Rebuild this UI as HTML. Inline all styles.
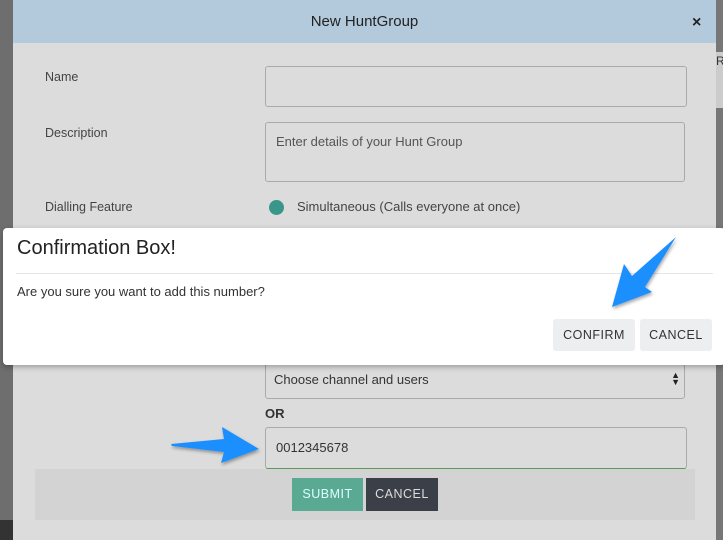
<!DOCTYPE html>
<html><head><style>
*{box-sizing:border-box;margin:0;padding:0}
body{width:723px;height:540px;overflow:hidden;position:relative;background:#6e6e6e;font-family:"Liberation Sans",sans-serif;}
.abs{position:absolute}
.dlg{left:13px;top:0;width:703px;height:540px;background:#dcdcdc}
.hdr{left:13px;top:0;width:703px;height:43px;background:#b3c9dc;text-align:center;line-height:43px;font-size:15px;color:#222}
.lbl{font-size:12.5px;color:#444;left:45px}
.inp{border:1px solid #aaa;border-radius:3px;background:#dcdcdc;font-size:13px;color:#555}
.btn{font-size:12.5px;letter-spacing:.5px;text-align:center}
</style></head><body>
<div class="abs" style="left:0;top:520px;width:723px;height:20px;background:#333"></div>
<div class="abs" style="left:716px;top:0;width:7px;height:540px;background:#777"></div>
<div class="abs" style="left:716px;top:52px;width:7px;height:56px;background:#ccc;font-size:12px;color:#333;padding-top:2px">R</div>
<div class="abs dlg"></div>
<div class="abs hdr">New HuntGroup</div>
<div class="abs" style="left:692px;top:14px;font-size:16px;font-weight:bold;color:#222">×</div>
<div class="abs lbl" style="top:70px">Name</div>
<div class="abs inp" style="left:265px;top:66px;width:422px;height:41px"></div>
<div class="abs lbl" style="top:126px">Description</div>
<div class="abs inp" style="left:265px;top:122px;width:420px;height:60px;padding:11px 10px">Enter details of your Hunt Group</div>
<div class="abs lbl" style="top:200px">Dialling Feature</div>
<div class="abs" style="left:269px;top:200px;width:15px;height:15px;border-radius:50%;background:#3a9688"></div>
<div class="abs" style="left:297px;top:199px;font-size:13px;color:#444">Simultaneous (Calls everyone at once)</div>
<div class="abs inp" style="left:265px;top:345px;width:420px;height:54px;padding:26px 8px 0;color:#333">Choose channel and users<span style="position:absolute;right:4px;top:26px;font-size:9px;line-height:7px;color:#222">▲<br>▼</span></div>
<div class="abs" style="left:265px;top:406px;font-size:13px;font-weight:bold;color:#333">OR</div>
<div class="abs" style="left:35px;top:469px;width:660px;height:51px;background:#d3d3d3"></div>
<div class="abs inp" style="left:265px;top:427px;width:422px;height:42px;padding:12px 10px;color:#333;border-bottom:1px solid #5a9a5a">0012345678</div>
<div class="abs btn" style="left:292px;top:478px;width:71px;height:33px;line-height:33px;background:#5aaa93;color:#dff">SUBMIT</div>
<div class="abs btn" style="left:366px;top:478px;width:72px;height:33px;line-height:33px;background:#3a3f48;color:#ddd">CANCEL</div>
<div class="abs" style="left:3px;top:228px;width:722px;height:137px;background:#fff;border-radius:4px;box-shadow:0 2px 6px rgba(0,0,0,.3)"></div>
<div class="abs" style="left:17px;top:237px;font-size:20px;color:#222">Confirmation Box!</div>
<div class="abs" style="left:16px;top:273px;width:697px;height:1px;background:#e5e5e5"></div>
<div class="abs" style="left:17px;top:284px;font-size:13px;color:#333">Are you sure you want to add this number?</div>
<div class="abs btn" style="left:553px;top:319px;width:82px;height:32px;line-height:32px;background:#eceeef;color:#333;border-radius:3px">CONFIRM</div>
<div class="abs btn" style="left:640px;top:319px;width:72px;height:32px;line-height:32px;background:#eceeef;color:#333;border-radius:3px">CANCEL</div>
<svg class="abs" style="left:0;top:0" width="723" height="540">
<defs><filter id="s"><feDropShadow dx="1" dy="2" stdDeviation="1.5" flood-opacity=".35"/></filter></defs>
<polygon filter="url(#s)" fill="#1e8fff" points="676,237 645,287 652,292 612,307 624,264 632,276"/>
<polygon filter="url(#s)" fill="#1e8fff" points="171,444 224,439 222,427 259,449 221,463 224,452 172,446"/>
</svg>
</body></html>
